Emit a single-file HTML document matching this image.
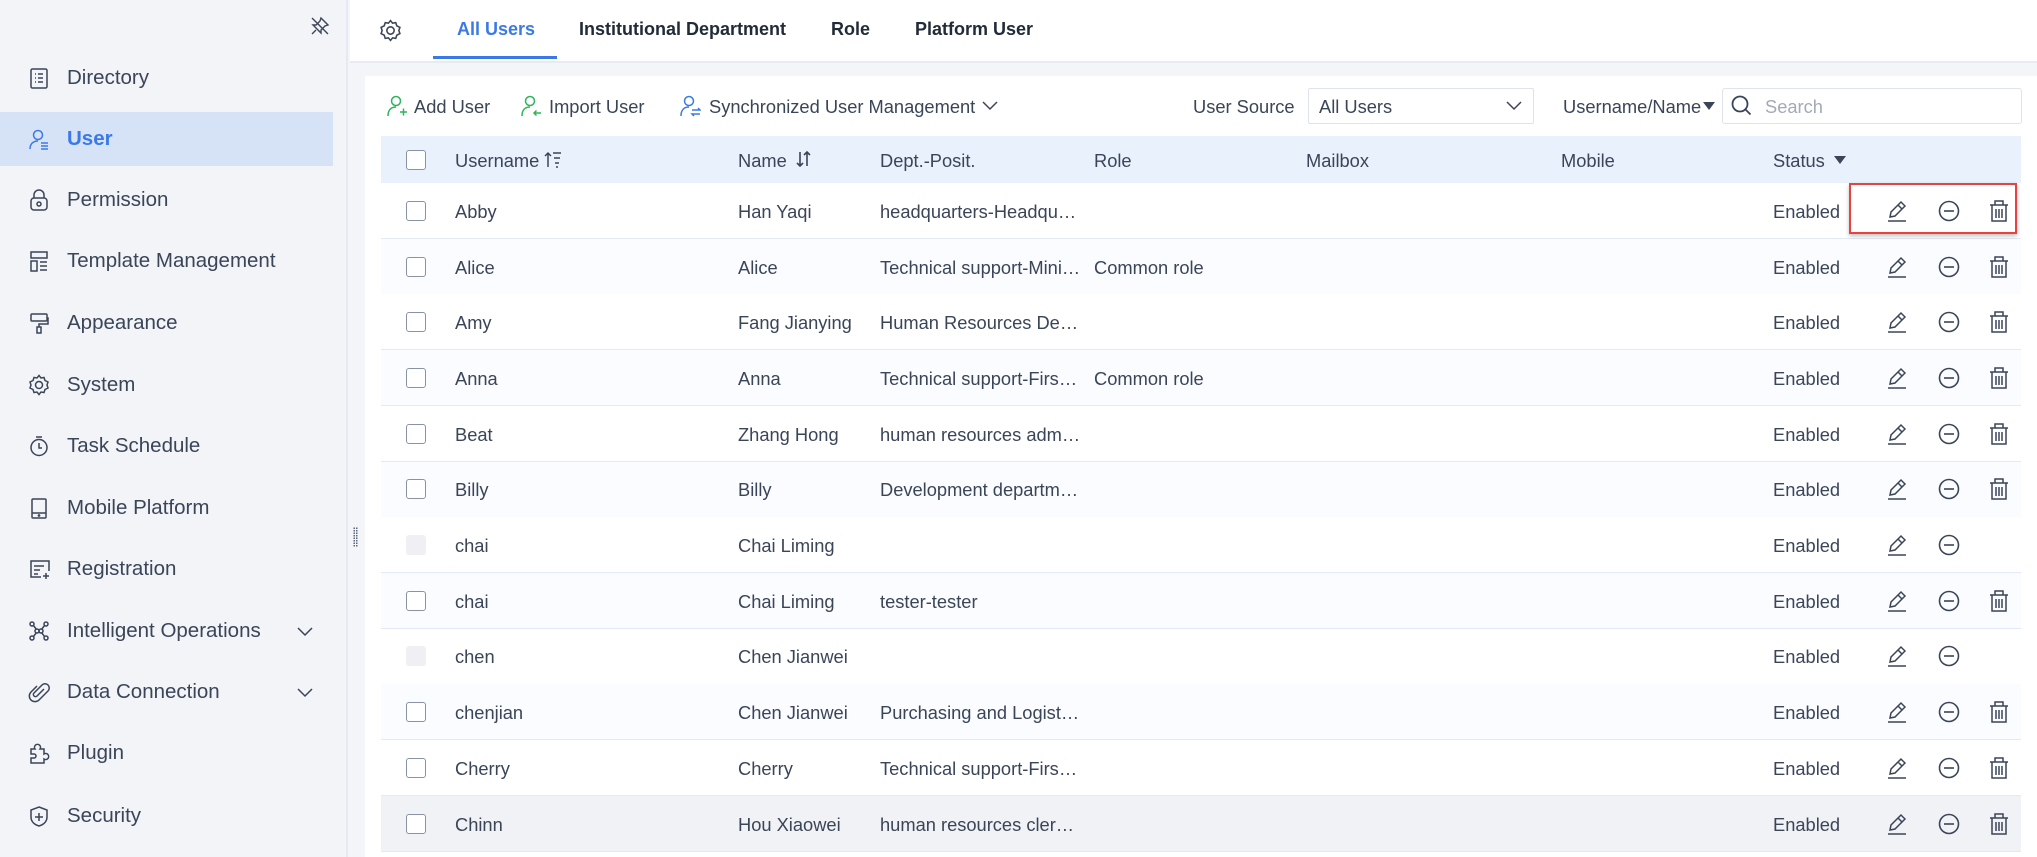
<!DOCTYPE html>
<html><head><meta charset="utf-8"><style>
*{box-sizing:border-box;margin:0;padding:0}
body{width:2037px;height:857px;overflow:hidden;background:#f4f5f8;font-family:"Liberation Sans",Arial,sans-serif;color:#3a4558;position:relative}
.side{position:absolute;left:0;top:0;width:348px;height:857px;background:#f2f4f8;border-right:2px solid #e6e9ef}
.mi{position:absolute;left:0;width:333px;height:54px;display:flex;align-items:center;font-size:20.5px;color:#3a4558}
.mi svg{position:absolute;left:28px;width:22px;height:22px}
.mi span{position:absolute;left:67px}
.mi.act{background:#d6e3f7;color:#3b7ae6;font-weight:bold}
.top{position:absolute;left:350px;top:0;right:0;height:63px;background:#fff;border-bottom:2px solid #e8ecf2}
.tab{position:absolute;top:19px;font-size:18px;font-weight:bold;color:#222b38}
.panel{position:absolute;left:365px;top:76px;width:1672px;height:781px;background:#fff}
.t{position:absolute;font-size:18.3px;white-space:nowrap}
.row{position:absolute;left:381px;width:1640px;height:56px;border-bottom:1.5px solid #e3eaf5}
.cb{position:absolute;left:406px;width:20px;height:20px;border:1.5px solid #8a93a3;border-radius:3px;background:#fff}
.cb.dis{border:none;background:#eef0f4}
</style></head><body>
<div class="side">
<svg style="position:absolute;left:310px;top:16px" width="20" height="20" viewBox="0 0 20 20" fill="none" stroke="#3a4558" stroke-width="1.4"><path d="M11 2l7 7-3 1-4 4 0 3-8-8 3 0 4-4z M6 14l-4 4 M2 2l16 16"/></svg>
</div>

<div class="mi" style="top:51px"><svg viewBox="0 0 22 22" fill="none" stroke="#3a4558" stroke-width="1.5"><rect x="3" y="2" width="16" height="19" rx="1.5"/><path d="M7 7h1M10 7h5M7 11h1M10 11h5M7 15h1M10 15h5"/></svg><span>Directory</span></div>
<div class="mi act" style="top:112px"><svg viewBox="0 0 22 22" fill="none" stroke="#3b7ae6" stroke-width="1.5"><circle cx="10" cy="7" r="4.5"/><path d="M2 21c0-5 3-8 8-8M13 15h7M13 18h7M13 21h7"/></svg><span>User</span></div>
<div class="mi" style="top:173px"><svg viewBox="0 0 22 22" fill="none" stroke="#3a4558" stroke-width="1.5"><rect x="3" y="9" width="16" height="12" rx="3"/><path d="M6 9V6a5 5 0 0 1 10 0v3"/><circle cx="11" cy="15" r="2"/></svg><span>Permission</span></div>
<div class="mi" style="top:234px"><svg viewBox="0 0 22 22" fill="none" stroke="#3a4558" stroke-width="1.5"><rect x="3" y="2" width="16" height="6"/><rect x="3" y="11" width="6" height="10"/><path d="M12 12h7M12 16h7M12 20h7"/></svg><span>Template Management</span></div>
<div class="mi" style="top:296px"><svg viewBox="0 0 22 22" fill="none" stroke="#3a4558" stroke-width="1.5"><rect x="3" y="2" width="16" height="7" rx="1"/><path d="M19 6h1v6h-9v3M9 15h4v6H9z"/></svg><span>Appearance</span></div>
<div class="mi" style="top:358px"><svg viewBox="0 0 22 22" fill="none" stroke="#3a4558" stroke-width="1.5"><path d="M11 1.5l2 2.5 3-.5 1 3 3 1.5-1 3 1 3-3 1.5-1 3-3-.5-2 2.5-2-2.5-3 .5-1-3-3-1.5 1-3-1-3 3-1.5 1-3 3 .5z"/><circle cx="11" cy="11" r="3.5"/></svg><span>System</span></div>
<div class="mi" style="top:419px"><svg viewBox="0 0 22 22" fill="none" stroke="#3a4558" stroke-width="1.5"><circle cx="11" cy="12.5" r="8"/><path d="M8 2h6M11 8v5h3"/></svg><span>Task Schedule</span></div>
<div class="mi" style="top:481px"><svg viewBox="0 0 22 22" fill="none" stroke="#3a4558" stroke-width="1.5"><rect x="4" y="2" width="14" height="19" rx="1"/><path d="M4 16h14"/><circle cx="11" cy="18.5" r=".6"/></svg><span>Mobile Platform</span></div>
<div class="mi" style="top:542px"><svg viewBox="0 0 22 22" fill="none" stroke="#3a4558" stroke-width="1.5"><path d="M13 19H3V3h18v10M6 8h10M6 12h6M6 16h4M15 18h6M18 15v6"/></svg><span>Registration</span></div>
<div class="mi" style="top:604px"><svg viewBox="0 0 22 22" fill="none" stroke="#3a4558" stroke-width="1.5"><circle cx="4" cy="4" r="2"/><circle cx="18" cy="4" r="2"/><circle cx="4" cy="18" r="2"/><circle cx="18" cy="18" r="2"/><circle cx="9" cy="11" r="2"/><circle cx="13" cy="11" r="2"/><path d="M5.5 5.5l3 4M16.5 5.5l-3 4M5.5 16.5l3-4M16.5 16.5l-3-4"/></svg><span>Intelligent Operations</span><svg style="left:296px;width:18px" viewBox="0 0 18 18" fill="none" stroke="#3a4558" stroke-width="1.5"><path d="M2 6l7 7 7-7"/></svg></div>
<div class="mi" style="top:665px"><svg viewBox="0 0 22 22" fill="none" stroke="#3a4558" stroke-width="1.5"><path d="M16 8l-7 7a2 2 0 0 1-3-3l8-8a4 4 0 0 1 6 6l-9 9a5.5 5.5 0 0 1-8-8l6-6"/></svg><span>Data Connection</span><svg style="left:296px;width:18px" viewBox="0 0 18 18" fill="none" stroke="#3a4558" stroke-width="1.5"><path d="M2 6l7 7 7-7"/></svg></div>
<div class="mi" style="top:726px"><svg viewBox="0 0 22 22" fill="none" stroke="#3a4558" stroke-width="1.5"><path d="M3 7h4a3 3 0 1 1 5 0h4v5a3 3 0 1 1 0 5v4H3v-5h3a2 2 0 1 0 0-4H3z"/></svg><span>Plugin</span></div>
<div class="mi" style="top:789px"><svg viewBox="0 0 22 22" fill="none" stroke="#3a4558" stroke-width="1.5"><path d="M11 2l8 3v7c0 5-4 8-8 9-4-1-8-4-8-9V5z M11 8v8M7 12h8"/></svg><span>Security</span></div>

<div class="top">
<svg style="position:absolute;left:29px;top:19px" width="23" height="23" viewBox="0 0 22 22" fill="none" stroke="#3a4558" stroke-width="1.5"><path d="M11 1.5l2 2.5 3-.5 1 3 3 1.5-1 3 1 3-3 1.5-1 3-3-.5-2 2.5-2-2.5-3 .5-1-3-3-1.5 1-3-1-3 3-1.5 1-3 3 .5z"/><circle cx="11" cy="11" r="3.5"/></svg>
<div class="tab" style="left:107px;color:#3b7ae6">All Users</div>
<div style="position:absolute;left:83px;top:56px;width:124px;height:3px;background:#3b7ae6"></div>
<div class="tab" style="left:229px">Institutional Department</div>
<div class="tab" style="left:481px">Role</div>
<div class="tab" style="left:565px">Platform User</div>
</div>

<div class="panel"></div>
<div style="position:absolute;left:353px;top:527px;width:5px;height:20px;background:radial-gradient(circle,#5a6578 0.8px,transparent 1px) 0 0/2.5px 2.5px"></div>
<!-- toolbar -->
<svg style="position:absolute;left:386px;top:95px" width="22" height="22" viewBox="0 0 22 22" fill="none" stroke="#2cb55a" stroke-width="1.5"><circle cx="10" cy="6" r="4.5"/><path d="M2 21c0-6 3-9 8-9M14 17h7M17.5 13.5v7"/></svg>
<div class="t" style="left:414px;top:96px">Add User</div>
<svg style="position:absolute;left:520px;top:95px" width="22" height="22" viewBox="0 0 22 22" fill="none" stroke="#2cb55a" stroke-width="1.5"><circle cx="10" cy="6" r="4.5"/><path d="M2 21c0-6 3-9 8-9M21 18h-7M16.5 15.5l-2.5 2.5 2.5 2.5"/></svg>
<div class="t" style="left:549px;top:96px">Import User</div>
<svg style="position:absolute;left:679px;top:95px" width="22" height="22" viewBox="0 0 22 22" fill="none" stroke="#3b7ae6" stroke-width="1.5"><circle cx="10" cy="6" r="4.5"/><path d="M2 21c0-6 3-9 8-9M13 15h8l-2-2M21 19h-8l2 2"/></svg>
<div class="t" style="left:709px;top:96px">Synchronized User Management</div>
<svg style="position:absolute;left:981px;top:99px" width="18" height="14" viewBox="0 0 18 14" fill="none" stroke="#3a4558" stroke-width="1.5"><path d="M2 3l7 7 7-7"/></svg>
<div class="t" style="left:1193px;top:96px">User Source</div>
<div style="position:absolute;left:1308px;top:88px;width:226px;height:36px;border:1px solid #dfe3ea;border-radius:2px"></div>
<div class="t" style="left:1319px;top:96px">All Users</div>
<svg style="position:absolute;left:1505px;top:99px" width="18" height="14" viewBox="0 0 18 14" fill="none" stroke="#3a4558" stroke-width="1.5"><path d="M2 3l7 7 7-7"/></svg>
<div class="t" style="left:1563px;top:96px">Username/Name</div>
<svg style="position:absolute;left:1703px;top:101px" width="12" height="10"><path d="M0 1h12L6 9z" fill="#3a4558"/></svg>
<div style="position:absolute;left:1722px;top:88px;width:300px;height:36px;border:1px solid #dfe3ea;border-radius:3px"></div>
<svg style="position:absolute;left:1730px;top:94px" width="24" height="24" viewBox="0 0 24 24" fill="none" stroke="#3a4558" stroke-width="1.8"><circle cx="10" cy="10" r="7.5"/><path d="M15.5 15.5l5 5"/></svg>
<div class="t" style="left:1765px;top:96px;color:#a3aab6">Search</div>

<!-- header -->
<div style="position:absolute;left:381px;top:136px;width:1640px;height:47px;background:#e9f1fc"></div>
<div class="cb" style="top:150px"></div>
<div class="t" style="left:455px;top:150px">Username</div>
<svg style="position:absolute;left:544px;top:150px" width="18" height="18" viewBox="0 0 18 18" fill="none" stroke="#3a4558" stroke-width="1.5"><path d="M4 17V3M1 6l3-3 3 3M9 3h8M10 8h6M11 13h4M12 17h2"/></svg>
<div class="t" style="left:738px;top:150px">Name</div>
<svg style="position:absolute;left:795px;top:150px" width="18" height="18" viewBox="0 0 18 18" fill="none" stroke="#3a4558" stroke-width="1.6"><path d="M5 2v14M2 13l3 3 3-3M12 16V2M9 5l3-3 3 3"/></svg>
<div class="t" style="left:880px;top:150px">Dept.-Posit.</div>
<div class="t" style="left:1094px;top:150px">Role</div>
<div class="t" style="left:1306px;top:150px">Mailbox</div>
<div class="t" style="left:1561px;top:150px">Mobile</div>
<div class="t" style="left:1773px;top:150px">Status</div>
<svg style="position:absolute;left:1834px;top:155px" width="12" height="10"><path d="M0 1h12L6 9z" fill="#3a4558"/></svg>

<div id="rows"></div>
<script>
var d=[["Abby","Han Yaqi","headquarters-Headqu…","",0,1],["Alice","Alice","Technical support-Mini…","Common role",0,1],["Amy","Fang Jianying","Human Resources De…","",0,1],["Anna","Anna","Technical support-Firs…","Common role",0,1],["Beat","Zhang Hong","human resources adm…","",0,1],["Billy","Billy","Development departm…","",0,1],["chai","Chai Liming","","",1,0],["chai","Chai Liming","tester-tester","",0,1],["chen","Chen Jianwei","","",1,0],["chenjian","Chen Jianwei","Purchasing and Logist…","",0,1],["Cherry","Cherry","Technical support-Firs…","",0,1],["Chinn","Hou Xiaowei","human resources cler…","",0,1]];
var h="";
d.forEach(function(r,i){var top=183+i*55.7;var c=top+27.8;
var bg=i==11?"#f0f2f5":(i%2?"#fafcff":"#fff");
h+='<div class="row" style="top:'+top+'px;background:'+bg+'"></div>';
h+='<div class="cb'+(r[4]?' dis':'')+'" style="top:'+(c-10)+'px"></div>';
h+='<div class="t" style="left:455px;top:'+(c-10)+'px">'+r[0]+'</div>';
h+='<div class="t" style="left:738px;top:'+(c-10)+'px">'+r[1]+'</div>';
h+='<div class="t" style="left:880px;top:'+(c-10)+'px">'+r[2]+'</div>';
h+='<div class="t" style="left:1094px;top:'+(c-10)+'px">'+r[3]+'</div>';
h+='<div class="t" style="left:1773px;top:'+(c-10)+'px">Enabled</div>';
h+='<svg style="position:absolute;left:1886px;top:'+(c-12)+'px" width="22" height="24" viewBox="0 0 22 24" fill="none" stroke="#3a4558" stroke-width="1.5"><path d="M4 18l1-5L15 3l4 4L9 17z M12 6l4 4 M2 22h18"/></svg>';
h+='<svg style="position:absolute;left:1937px;top:'+(c-12)+'px" width="24" height="24" viewBox="0 0 24 24" fill="none" stroke="#3a4558" stroke-width="1.6"><circle cx="12" cy="12" r="9.5"/><path d="M7 12h10"/></svg>';
if(r[5])h+='<svg style="position:absolute;left:1988px;top:'+(c-12)+'px" width="22" height="24" viewBox="0 0 22 24" fill="none" stroke="#3a4558" stroke-width="1.5"><path d="M2 6h18M7 6V2h8v4M4 6v16h14V6M8 10v9M11 10v9M14 10v9"/></svg>';
});
h+='<div style="position:absolute;left:1849px;top:183px;width:168px;height:51px;border:2.5px solid #e94040;box-shadow:0 2px 4px rgba(0,0,0,.25)"></div>';
document.getElementById("rows").innerHTML=h;
</script>
</body></html>
